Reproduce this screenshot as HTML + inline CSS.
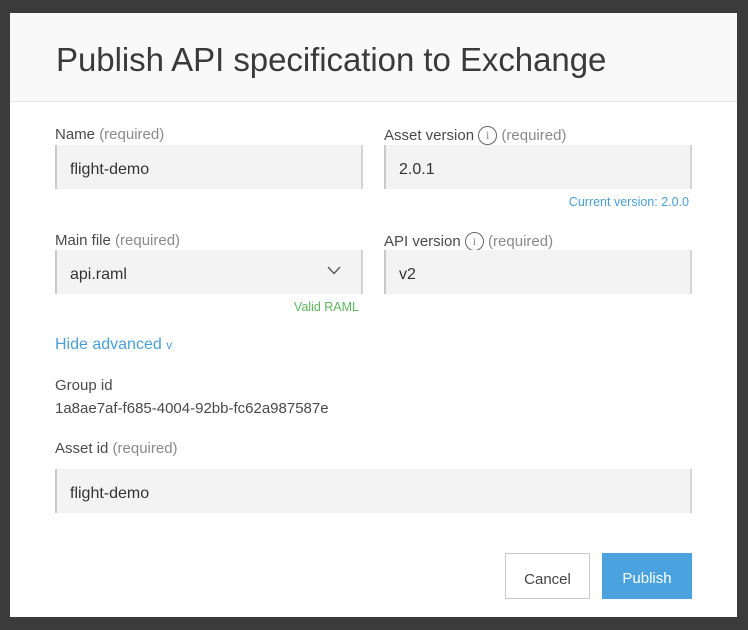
<!DOCTYPE html>
<html><head><style>
body{margin:0;width:748px;height:630px;background:#3b3b3b;font-family:"Liberation Sans",sans-serif;position:relative;overflow:hidden}
.dlg{position:absolute;left:10px;top:13px;width:727px;height:604px;background:#fff}
.hdr{position:absolute;left:0;top:0;width:727px;height:88px;background:#f9f9f9;border-bottom:1px solid #e4e4e4}
.title{position:absolute;left:46px;top:28px;font-size:33px;color:#3a3a3a;font-weight:300;letter-spacing:-0.05px}
.lbl{position:absolute;font-size:15px;color:#4a4a4a;white-space:nowrap}
.lbl span{color:#8a8a8a}
.inp{position:absolute;height:44px;background:#f3f3f4;border-left:2px solid #c9c9c9;border-right:2px solid #d4d4d4;box-sizing:border-box;font-size:16px;color:#333;padding-left:13px;line-height:49px}
.info{display:inline-block;width:17px;height:17px;border:1px solid #666;border-radius:50%;font-size:12px;line-height:17px;text-align:center;color:#555;vertical-align:1px;font-family:"Liberation Serif",serif}
.hint{position:absolute;font-size:12.5px;white-space:nowrap}
.btn{position:absolute;top:540px;height:46px;line-height:51px;text-align:center;font-size:15px;box-sizing:border-box}
</style></head><body>
<div class="dlg">
<div class="hdr"><div class="title">Publish API specification to Exchange</div></div>
<div class="lbl" style="left:45px;top:113px">Name <span>(required)</span></div>
<div class="inp" style="left:45px;top:132px;width:308px">flight-demo</div>
<div class="lbl" style="left:374px;top:113px">Asset version <span class="info">i</span> <span>(required)</span></div>
<div class="inp" style="left:374px;top:132px;width:308px">2.0.1</div>
<div class="hint" style="right:48px;top:182px;color:#4a9fd6">Current version: 2.0.0</div>
<div class="lbl" style="left:45px;top:219px">Main file <span>(required)</span></div>
<div class="inp" style="left:45px;top:237px;width:308px">api.raml
<svg style="position:absolute;right:20px;top:16px" width="14" height="9" viewBox="0 0 14 9"><path d="M1 1 L7 7.5 L13 1" fill="none" stroke="#555" stroke-width="1.3"/></svg></div>
<div class="hint" style="right:378px;top:287px;color:#5cb85c">Valid RAML</div>
<div class="lbl" style="left:374px;top:219px">API version <span class="info">i</span> <span>(required)</span></div>
<div class="inp" style="left:374px;top:237px;width:308px">v2</div>
<div class="lbl" style="left:45px;top:323px;font-size:16px;color:#4a9fd6">Hide advanced <span style="color:#4a9fd6;font-size:12px">v</span></div>
<div class="lbl" style="left:45px;top:364px">Group id</div>
<div class="lbl" style="left:45px;top:387px">1a8ae7af-f685-4004-92bb-fc62a987587e</div>
<div class="lbl" style="left:45px;top:427px">Asset id <span>(required)</span></div>
<div class="inp" style="left:45px;top:456px;width:637px">flight-demo</div>
<div class="btn" style="left:495px;width:85px;border:1px solid #ccc;color:#444">Cancel</div>
<div class="btn" style="left:592px;width:90px;background:#4aa3df;color:#fff">Publish</div>
</div>
</body></html>
